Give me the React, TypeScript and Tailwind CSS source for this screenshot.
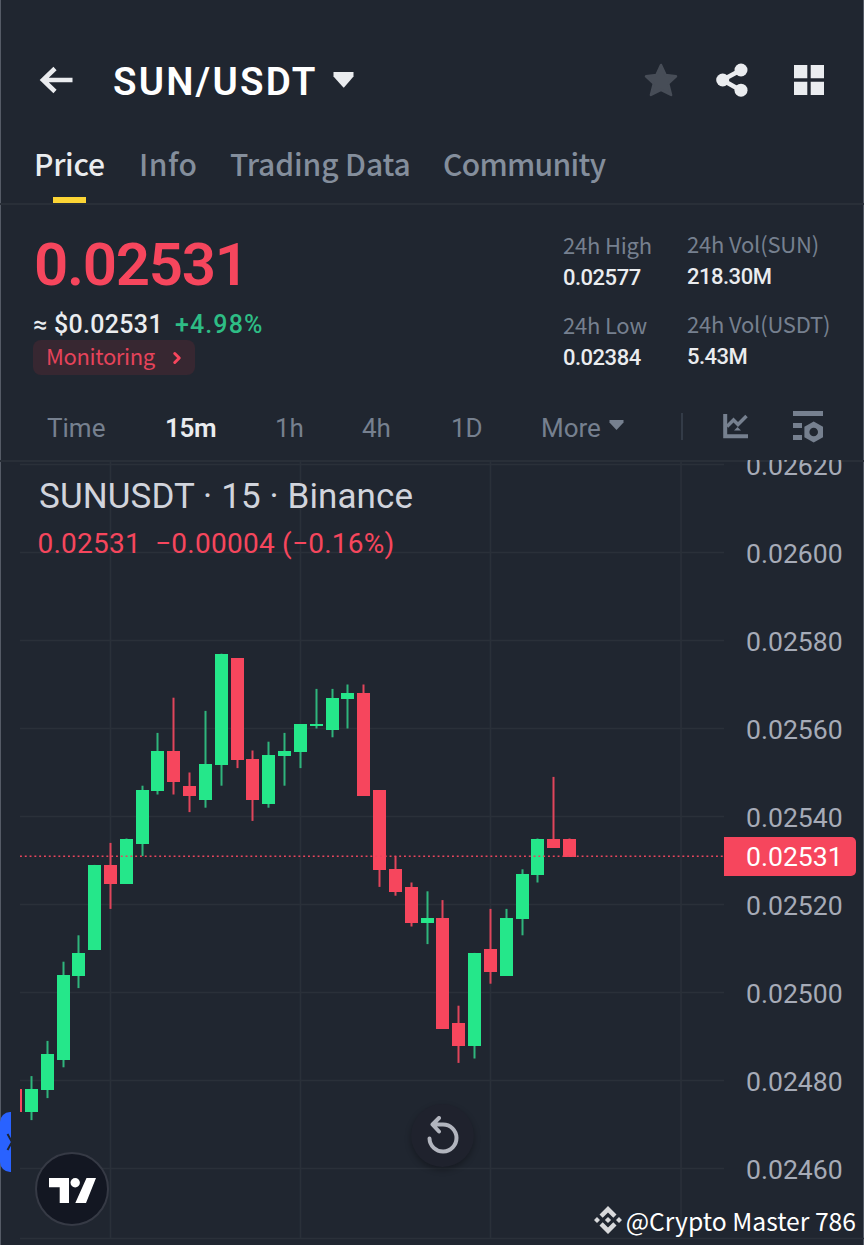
import { ChevronRight } from "lucide-react";

const MAX_TICK = 2620;
const TICK_HEIGHT = 4.4;
const CANDLE_STEP = 15.828;

// high, body top, body bottom, low (in 0.00001 ticks), up
type Candle = [number, number, number, number, boolean];

const CANDLES: Candle[] = [
  [2478, 2478, 2473, 2473, false],
  [2481, 2478, 2473, 2471, true],
  [2489, 2486, 2478, 2476, true],
  [2507, 2504, 2485, 2483, true],
  [2513, 2509, 2504, 2501, true],
  [2529, 2529, 2510, 2510, true],
  [2534, 2529, 2525, 2519, false],
  [2535, 2535, 2525, 2525, true],
  [2547, 2546, 2534, 2531, true],
  [2559, 2555, 2546, 2545, true],
  [2567, 2555, 2548, 2545, false],
  [2550, 2547, 2545, 2541, false],
  [2564, 2552, 2544, 2542, true],
  [2577, 2577, 2552, 2547, true],
  [2576, 2576, 2553, 2551, false],
  [2555, 2553, 2544, 2539, false],
  [2557, 2554, 2543, 2542, true],
  [2559, 2555, 2554, 2547, true],
  [2561, 2561, 2555, 2551, true],
  [2569, 2561, 2561, 2560, true],
  [2569, 2567, 2560, 2558, true],
  [2570, 2568, 2567, 2560, true],
  [2570, 2568, 2545, 2545, false],
  [2546, 2546, 2528, 2524, false],
  [2531, 2528, 2523, 2522, false],
  [2525, 2524, 2516, 2515, false],
  [2523, 2517, 2516, 2511, true],
  [2521, 2517, 2492, 2492, false],
  [2497, 2493, 2488, 2484, false],
  [2509, 2509, 2488, 2485, true],
  [2519, 2510, 2505, 2502, false],
  [2519, 2517, 2504, 2504, true],
  [2528, 2527, 2517, 2513, true],
  [2535, 2535, 2527, 2525, true],
  [2549, 2535, 2533, 2533, false],
  [2535, 2535, 2531, 2531, false],
];

const AXIS = [
  "0.02620",
  "0.02600",
  "0.02580",
  "0.02560",
  "0.02540",
  "0.02520",
  "0.02500",
  "0.02480",
  "0.02460",
];

const GRID_X = [110.5, 300.5, 490.5, 681];

function tickY(tick: number) {
  return 4.5 + (MAX_TICK - tick) * TICK_HEIGHT;
}

function CandleChart() {
  return (
    <svg width="864" height="785" viewBox="0 0 864 785" className="block">
      <defs>
        <clipPath id="plot">
          <rect x="20" y="0" width="704" height="778" />
        </clipPath>
      </defs>
      <g stroke="#2a3039" strokeWidth="1.7">
        {AXIS.map((label, i) => (
          <line key={label} x1="20" x2="724" y1={4.5 + i * 88} y2={4.5 + i * 88} />
        ))}
        {GRID_X.map((x) => (
          <line key={x} x1={x} x2={x} y1="0" y2="778" />
        ))}
        <line x1="20" x2="864" y1="778.5" y2="778.5" />
      </g>
      <g clipPath="url(#plot)">
        {CANDLES.map(([high, top, bottom, low, up], i) => {
          const x = Math.floor(9.52 + i * CANDLE_STEP);
          const bodyY = Math.round(tickY(top));
          const bodyBottom = Math.round(tickY(bottom) + 1);
          return (
            <g key={i}>
              <rect
                x={x + 5.5}
                y={tickY(high)}
                width="2"
                height={tickY(low) - tickY(high)}
                fill={up ? "#2fb57c" : "#e0455b"}
              />
              <rect
                x={x}
                y={bodyY}
                width="13"
                height={Math.max(2, bodyBottom - bodyY)}
                fill={up ? "#25e78a" : "#f6465d"}
              />
            </g>
          );
        })}
      </g>
      <line
        x1="20"
        x2="724"
        y1="396.3"
        y2="396.3"
        stroke="#e8455c"
        strokeWidth="1.6"
        strokeDasharray="1.9 2.9"
      />
    </svg>
  );
}

function Header() {
  return (
    <header className="flex h-[122px] items-center pt-[38px] pl-[39px]">
      <svg width="34" height="28" viewBox="0 0 34 28" fill="none" stroke="#eaecef" strokeWidth="4.6">
        <path d="M33.5 14H4M16 2.5 4 14l12 11.5" />
      </svg>
      <h1 className="ml-[40px] w-[205px] pt-[5px] font-[Roboto] text-[38.5px] leading-none font-semibold tracking-[2.2px] text-white">
        SUN/USDT
      </h1>
      <svg width="22" height="18" viewBox="0 0 22 18" className="ml-[15px]" fill="#eaecef">
        <path d="M.5 1h20v4.500L11 16.500h-.6L.5 5.500z" />
      </svg>
      <svg width="34" height="34" viewBox="0 0 34 34" className="ml-[289px]" fill="#474d57">
        <path
          d="M17 2l4.600 10L32 13.300l-7.800 7.200L27.100 32 17 26.800 6.900 32l2.900-11.500L2 13.300 12.400 12z"
          stroke="#474d57"
          strokeWidth="2.500"
          strokeLinejoin="round"
        />
      </svg>
      <svg width="32" height="34" viewBox="0 0 32 34" className="ml-[38px]" fill="#eaecef">
        <path d="M6.500 17 25 7M6.500 17 25 27.500" stroke="#eaecef" strokeWidth="4.500" />
        <circle cx="6.700" cy="17" r="6.500" />
        <circle cx="25" cy="7" r="6.500" />
        <circle cx="25" cy="27.200" r="6.500" />
      </svg>
      <svg width="30" height="30" viewBox="0 0 30 30" className="ml-[46px]" fill="#eaecef">
        <path d="M0 0h13.300v13.300H0zM16.700 0H30v13.300H16.700zM0 16.700h13.300V30H0zM16.700 16.700H30V30H16.700z" />
      </svg>
    </header>
  );
}

function Tabs() {
  return (
    <nav className="flex h-[83px] border-b-2 border-[#292f38] pt-[24px] pl-[34px] text-[30px] leading-[34px] font-medium text-[#848e9c]">
      <div className="w-[105px] text-[#eaecef]">
        <div className="tracking-[-0.3px]">Price</div>
        <div className="mt-[17px] ml-[19px] h-[6px] w-[33px] bg-[#fcd535]" />
      </div>
      <div className="w-[91px] tracking-[0.5px]">Info</div>
      <div className="w-[213px] tracking-[-0.1px]">Trading Data</div>
      <div className="tracking-[-0.7px]">Community</div>
    </nav>
  );
}

function Stat({ label, value }: { label: string; value: string }) {
  return (
    <div className="h-[80px]">
      <div className="text-[22px] leading-[30px] tracking-[-0.2px] text-[#76808f]">{label}</div>
      <div className="pt-[2px] font-[Roboto] text-[22px] leading-[34px] font-medium tracking-[-0.5px] text-[#eaecef]">
        {value}
      </div>
    </div>
  );
}

function PriceSummary() {
  return (
    <section className="flex h-[185px] pl-[33px]">
      <div className="w-[530px] pt-[30px]">
        <div className="ml-px font-[Roboto] text-[60px] leading-[60px] font-semibold tracking-[-1.3px] text-[#f6465d]">
          0.02531
        </div>
        <div className="mt-[15px] flex font-[Roboto] text-[25px] leading-[30px] font-medium whitespace-pre">
          <span className="w-[142px] tracking-[0.3px] text-[#eaecef]">≈ $0.02531</span>
          <span className="tracking-[1.1px] text-[#2ebd85]">+4.98%</span>
        </div>
        <div className="flex h-[35px] w-[162px] items-center rounded-lg bg-[#372731] pl-[13px] text-[#e5435a]">
          <span className="w-[122px] pb-[5px] text-[22px] leading-none tracking-[-0.35px]">
            Monitoring
          </span>
          <ChevronRight size={18} strokeWidth={4} className="text-[#f6465d]" />
        </div>
      </div>
      <div className="w-[124px] pt-[24px]">
        <Stat label="24h High" value="0.02577" />
        <Stat label="24h Low" value="0.02384" />
      </div>
      <div className="pt-[23px]">
        <Stat label="24h Vol(SUN)" value="218.30M" />
        <Stat label="24h Vol(USDT)" value="5.43M" />
      </div>
    </section>
  );
}

function Intervals() {
  return (
    <div className="flex h-[72px] items-center border-b-2 border-[#292f38] pt-[5px] pl-[47px] font-[Roboto] text-[26px] leading-none text-[#76808f]">
      <span className="w-[118px]">Time</span>
      <span className="w-[110px] font-semibold tracking-[-0.4px] text-[#eaecef]">15m</span>
      <span className="w-[87px]">1h</span>
      <span className="w-[89px]">4h</span>
      <span className="w-[90px]">1D</span>
      <span className="w-[68px]">More</span>
      <svg width="15" height="12" viewBox="0 0 15 12" className="-mt-[5px]" fill="#76808f">
        <path d="M.5 1h14v2.500L7.500 11 .5 3.500z" />
      </svg>
      <div className="-mt-[3px] ml-[57px] h-[27px] w-[2px] bg-[#333b47]" />
      <svg width="26" height="26" viewBox="0 0 26 26" className="-mt-[4px] ml-[40px]" fill="none">
        <path d="M2.200 1v22.300H25" stroke="#76808f" strokeWidth="4" />
        <path d="M4 13.500l6.500-6.500 4.500 4.500 8.500-8.500" stroke="#76808f" strokeWidth="3.500" />
        <path d="M14.500 14l3.500 3.500h-7z" fill="#76808f" />
      </svg>
      <svg width="32" height="32" viewBox="0 0 32 32" className="-mt-[1px] ml-[43px]" fill="#76808f">
        <path d="M1 0h30v5H1zM1 12h9v5H1zM1 24h9v5H1z" />
        <path
          fillRule="evenodd"
          d="M21.700 10.500 31 15.800v10.400l-9.300 5.300-9.300-5.300V15.800zM21.700 16.700a4.300 4.300 0 100 8.600 4.300 4.300 0 000-8.600z"
        />
      </svg>
    </div>
  );
}

function BinanceMark() {
  return (
    <svg width="28" height="28" viewBox="0 0 28 28" fill="#d8d9db">
      <path d="M14 0l8.500 8.500-3.200 3.200L14 6.400l-5.300 5.300-3.200-3.200zM14 28l-8.500-8.500 3.200-3.200 5.300 5.300 5.300-5.300 3.200 3.200zM3 11l3 3-3 3-3-3zM25 11l3 3-3 3-3-3zM14 10.900l3.100 3.100-3.100 3.100-3.100-3.100z" />
    </svg>
  );
}

function ChartPanel() {
  return (
    <section className="relative -mt-[2px] h-[785px] overflow-hidden font-[Roboto]">
      <CandleChart />

      <div className="absolute top-[17px] left-[39px] text-[35px] leading-[40px] tracking-[0.1px] whitespace-pre text-[#d1d4dc]">
        SUNUSDT · 15 · Binance
      </div>
      <div className="absolute top-[68px] left-[37.5px] flex gap-[14px] text-[28px] leading-[32px] tracking-[0.25px] text-[#f6465d]">
        <span>0.02531</span>
        <span>−0.00004 (−0.16%)</span>
      </div>

      {/* price scale */}
      <div className="absolute -top-[38px] left-[746px] flex flex-col text-[26.600px] text-[#a6abb7]">
        {AXIS.map((label) => (
          <span key={label} className="h-[88px] leading-[88px]">
            {label}
          </span>
        ))}
      </div>
      <div className="absolute top-[377px] left-[724px] h-[39px] w-[132px] rounded-r-[5px] bg-[#f6465d] pl-[22px] text-[26.600px] leading-[40px] text-white">
        0.02531
      </div>

      {/* drawing toolbar handle */}
      <div className="absolute top-[652px] left-0 h-[60px] w-[11px] overflow-hidden rounded-l-[10px] bg-[#2962ff]">
        <svg width="11" height="60" viewBox="0 0 11 60" fill="none" stroke="#1d2432" strokeWidth="2">
          <path d="M7.500 22l4.500 8-4.500 8" />
        </svg>
      </div>

      <div className="absolute top-[692px] left-[35px]">
        <svg width="74" height="74" viewBox="0 0 74 74">
          <circle cx="37" cy="37" r="36" fill="#131722" stroke="#363a45" strokeWidth="2" />
          <path
            d="M14 26h20v25h-9.300V35.300H14zM51.500 26H61L51 51H40.300z"
            fill="#fff"
          />
          <circle cx="40.200" cy="30.700" r="4.700" fill="#fff" />
        </svg>
      </div>

      <div className="absolute top-[644px] left-[411px] flex size-[63px] items-center justify-center rounded-full bg-[#1f222d] pb-[2px] shadow-[0_3px_6px_rgba(0,0,0,0.3)]">
        <svg width="32" height="38" viewBox="0 0 32 38" fill="none" stroke="#b2b5be" strokeWidth="4" strokeLinecap="round" strokeLinejoin="round">
          <path d="M2.500 22.500A13.500 13.500 0 1016 8.500H6M12 2 5.500 8.500 12 15.500" />
        </svg>
      </div>

      <div className="absolute top-[743px] right-[8px] flex items-center gap-[4px] font-['Noto_Sans_CJK_SC',sans-serif] text-[24.700px] leading-[34px] text-white">
        <BinanceMark />
        <span>@Crypto Master 786</span>
      </div>
    </section>
  );
}

export default function App() {
  return (
    <main className="h-[1245px] w-[864px] overflow-hidden bg-[#202630] font-['Noto_Sans_CJK_SC',sans-serif] shadow-[inset_1px_0_#555b66,inset_-1px_0_#555b66]">
      <Header />
      <Tabs />
      <PriceSummary />
      <Intervals />
      <ChartPanel />
    </main>
  );
}
